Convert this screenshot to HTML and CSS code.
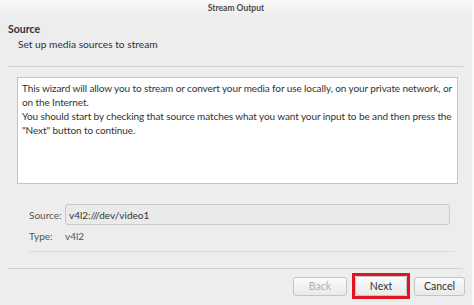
FILE: index.html
```html
<!DOCTYPE html>
<html lang="en">
  <head>
    <meta charset="UTF-8" />
    <title>Stream Output</title>
    <link rel="stylesheet" href="styles.css">
  </head>
  <body>
    <div class="dialog">
      <div class="titlebar">Stream Output</div>
      <div class="page-header">
        <h1>Source</h1>
        <p>Set up media sources to stream</p>
      </div>
      <div class="separator"></div>
      <div class="page-body">
        <div class="intro">
          This wizard will allow you to stream or convert your media for use locally, on your private network, or on the Internet.<br />
          You should start by checking that source matches what you want your input to be and then press the "Next" button to continue.
        </div>
        <div class="source-form">
          <div class="form-row">
            <label for="source">Source:</label>
            <input type="text" id="source" class="form-control" value="v4l2:///dev/video1" readonly />
          </div>
          <div class="form-row type-row">
            <span class="label">Type:</span>
            <span class="value">v4l2</span>
          </div>
        </div>
      </div>
      <div class="separator"></div>
      <div class="button-bar">
        <button class="btn btn-back" disabled>Back</button>
        <div class="highlight">
          <button class="btn">Next</button>
        </div>
        <button class="btn btn-cancel">Cancel</button>
      </div>
    </div>
  </body>
</html>
```

FILE: styles.css
```css
* {
  margin: 0;
  padding: 0;
  box-sizing: border-box;
}
body {
  font-family: Lato, "DejaVu Sans", sans-serif;
  font-size: 10px;
  color: #2e3436;
  background-color: #ededed;
  width: 474px;
  height: 305px;
  overflow: hidden;
}
.dialog {
  height: 305px;
  padding-left: 3px;
  padding-right: 6px;
  border-right: 2px solid #fafafa;
  display: flex;
  flex-direction: column;
}
.titlebar {
  height: 17px;
  margin: 0 -6px 0 -3px;
  background: linear-gradient(#fafafa, #ededed);
  text-align: center;
  font-weight: bold;
  font-size: 8.5px;
  line-height: 17px;
  color: #4a4a4a;
}
.page-header {
  padding: 4px 5px 0;
  height: 49px;
}
.page-header h1 {
  font-size: 10.5px;
  font-weight: bold;
  line-height: 16px;
}
.page-header p {
  padding-left: 10px;
  line-height: 14px;
  font-size: 10.2px;
}
.separator {
  height: 1px;
  margin: 0 3px 0 5px;
  background-color: #cfcfcf;
}
.page-body {
  flex: 1;
  padding: 10px 8px 0 14px;
}
.intro {
  height: 107px;
  background-color: #fff;
  border: 1px solid #c4c4c4;
  padding: 3px 4px;
  line-height: 14px;
  letter-spacing: -0.1px;
}
.source-form {
  margin: 20px 3px 0 12px;
  border-bottom: 1px solid #dcdcdc;
  padding-bottom: 4px;
}
.form-row {
  display: flex;
  align-items: center;
}
.form-row label,
.form-row .label {
  width: 36px;
  color: #555;
}
.form-control {
  flex: 1;
  height: 21px;
  border: 1px solid #c8c8c8;
  border-radius: 3px;
  background-color: #eaeaea;
  padding: 0 3px;
  font: inherit;
  color: #2e3436;
  margin-right: 5px;
}
.type-row {
  height: 22px;
}
.type-row .value {
  color: #555;
}
.button-bar {
  display: flex;
  justify-content: flex-end;
  align-items: center;
  gap: 4px;
  padding: 0 1px 2px 0;
  height: 36px;
}
.btn {
  width: 52px;
  height: 19px;
  border: 1px solid #c4c4c4;
  border-radius: 3px;
  background: linear-gradient(#fbfbfb, #e9e9e9);
  font: inherit;
  font-size: 10.5px;
  color: #2e3436;
}
.btn-back {
  color: #b0b0b0;
  width: 54px;
  margin-right: 1px;
}
.btn-cancel {
  width: 51px;
}
.highlight {
  border: 3px solid #e0161e;
  display: flex;
}
.highlight .btn {
  height: 20px;
}
```
